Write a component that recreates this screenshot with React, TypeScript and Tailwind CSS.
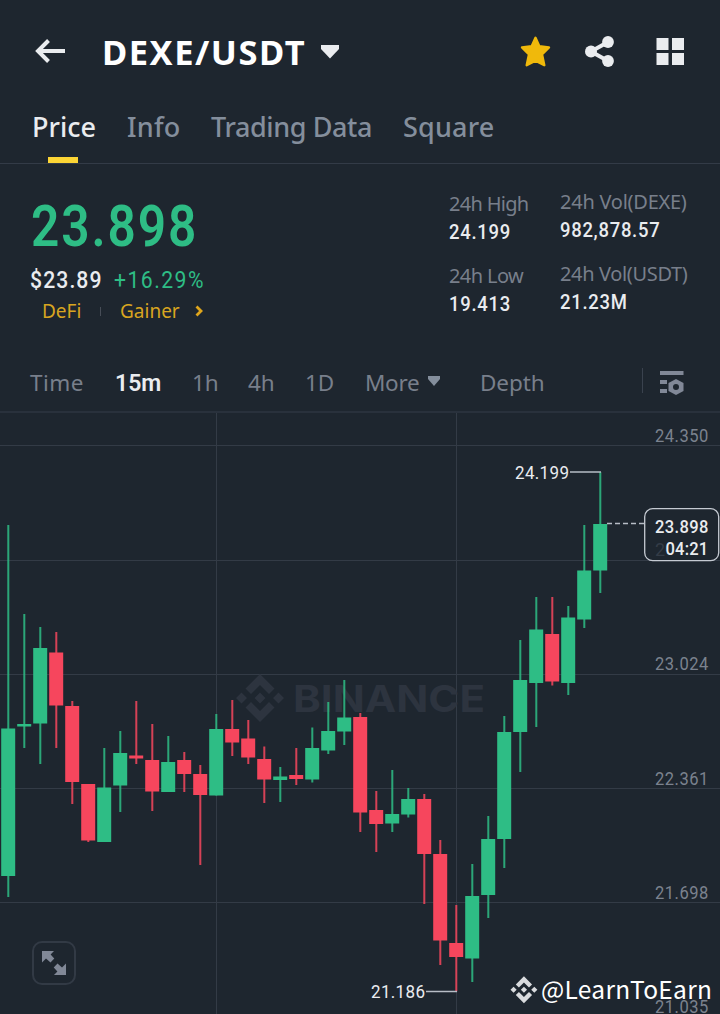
import type { ReactNode } from 'react';

type Candle = {
  readonly up: boolean;
  readonly high: number;
  readonly top: number;
  readonly bottom: number;
  readonly low: number;
};

const UP = '#2ebd85';
const DOWN = '#f6465d';
const CANDLE_STEP = 16;

const c = (up: 0 | 1, high: number, top: number, bottom: number, low: number): Candle => ({
  up: up === 1,
  high,
  top,
  bottom,
  low,
});

// Oldest first, y values in chart space
const CANDLES: readonly Candle[] = [
  c(1, 525, 728.5, 876, 897),
  c(1, 614, 724, 726.5, 748),
  c(1, 627, 648, 723.5, 764),
  c(0, 632, 652.5, 705.5, 748),
  c(0, 701, 706, 782, 804),
  c(0, 784, 784, 840.5, 842),
  c(1, 748, 787.5, 842, 842),
  c(1, 731, 753, 785.5, 812),
  c(0, 701, 755.5, 758.5, 764),
  c(0, 724, 760, 791.5, 811),
  c(1, 736, 762, 792, 792),
  c(0, 752, 760, 774, 792),
  c(0, 765, 774, 795, 865),
  c(1, 714, 729, 795.5, 795.5),
  c(0, 700, 729, 742.5, 756),
  c(0, 720, 738.5, 757.5, 764),
  c(0, 746.5, 759, 779.5, 803),
  c(1, 767, 776.5, 780, 802),
  c(0, 748, 775, 779, 785),
  c(1, 727.5, 748, 779.5, 782.5),
  c(1, 702, 731, 750.5, 754),
  c(1, 680, 717.5, 731.5, 745),
  c(0, 713, 717, 812.5, 832),
  c(0, 791, 810, 824, 852),
  c(1, 770, 814, 823.5, 832),
  c(1, 788, 799, 814.5, 817.5),
  c(0, 794, 799, 854, 904),
  c(0, 840, 854, 940.5, 965),
  c(0, 905, 943, 957, 991.5),
  c(1, 864, 896, 958.5, 982),
  c(1, 816, 839, 895, 918),
  c(1, 716, 732, 839, 868),
  c(1, 640, 680, 732, 772),
  c(1, 597, 629.5, 683, 727),
  c(0, 597, 634, 681.5, 685.5),
  c(1, 606, 617.5, 683, 695),
  c(1, 525, 570.5, 619.5, 628),
  c(1, 472, 524, 570.5, 593),
];

const GRID_Y = [445.5, 560.5, 674.5, 788.5, 902.5];
const GRID_X = [216.5, 456.5];

const AXIS_LABELS = [
  { label: '24.350', y: 442 },
  { label: '23.024', y: 670 },
  { label: '22.361', y: 785 },
  { label: '21.698', y: 899 },
  { label: '21.035', y: 1013 },
];

const TABS = [
  { label: 'Price', className: 'w-16 text-[#eaecef]' },
  { label: 'Info', className: 'w-[53px] tracking-[0.2px] text-[#848e9c]' },
  { label: 'Trading Data', className: 'w-[161px] tracking-[-0.4px] text-[#848e9c]' },
  { label: 'Square', className: 'w-[91px] tracking-[0.2px] text-[#848e9c]' },
];

function BinanceMark() {
  return (
    <path d="M24 0 38.5 14.5 33 20 24 11 15 20 9.5 14.5ZM0 24 5.5 18.5 11 24 5.5 29.5ZM37 24 42.5 18.5 48 24 42.5 29.5ZM18.5 24 24 18.5 29.5 24 24 29.5ZM9.5 33.5 15 28 24 37 33 28 38.5 33.5 24 48Z" />
  );
}

function Header() {
  return (
    <header className="flex h-[102px] items-center pl-[35px] pr-9">
      <svg className="h-6 w-[30px]" viewBox="0 0 30 24" fill="none" stroke="#eaecef" strokeWidth="4">
        <path d="M30 12H3M13.5 1.5 3 12 13.5 22.5" />
      </svg>
      <h1 className="ml-[37px] mt-0.5 w-[202px] whitespace-nowrap font-['Noto_Sans',sans-serif] text-[34.5px] font-bold leading-[44px] tracking-[1.5px] text-white">
        DEXE/USDT
      </h1>
      <svg className="ml-[17px] h-[15px] w-[18px]" viewBox="0 0 18 15" fill="#eaecef">
        <path d="M0 1H18V5L9 14.5 0 5Z" />
      </svg>
      <div className="ml-auto flex items-center">
        <svg className="mr-px h-[31px] w-[31px]" viewBox="0 0 31 31" fill="#f0b90b" stroke="#f0b90b" strokeWidth="2.4" strokeLinejoin="round">
          <path d="M15.5 1.8 19.3 10.3 29 11.4 22 18.3 24.3 29.2 15.5 24.6 6.7 29.2 9 18.3 2 11.4 11.7 10.3Z" />
        </svg>
        <svg className="ml-[33px] mr-px h-[31px] w-[29px]" viewBox="0 0 29 31" fill="#eaecef">
          <path d="M23 6 6 15.5 23 25" fill="none" stroke="#eaecef" strokeWidth="4" />
          <circle cx="23" cy="6" r="5.9" />
          <circle cx="6" cy="15.5" r="6" />
          <circle cx="23" cy="25" r="5.9" />
        </svg>
        <svg className="ml-[41px] h-[27px] w-7" viewBox="0 0 28 27" fill="#eaecef">
          <path d="M0.5 0H12.5V12H0.5ZM16 0H28V12H16ZM0.5 15H12.5V27H0.5ZM16 15H28V27H16Z" />
        </svg>
      </div>
    </header>
  );
}

function Tabs() {
  return (
    <nav className="flex h-[62px] gap-[31px] border-b border-[#333b47] pl-8 font-['Noto_Sans',sans-serif] text-[27px] font-medium leading-[50px]">
      {TABS.map((tab, i) => (
        <div key={tab.label} className={`flex flex-col whitespace-nowrap ${tab.className}`}>
          {tab.label}
          {i === 0 && <span className="ml-4 mt-[5px] h-1.5 w-[30px] bg-[#fcd535]" />}
        </div>
      ))}
    </nav>
  );
}

type StatProps = {
  readonly label: string;
  readonly labelClassName: string;
  readonly children: ReactNode;
};

function Stat({ label, labelClassName, children }: StatProps) {
  return (
    <div className="whitespace-nowrap leading-7">
      <div className={`font-['Noto_Sans',sans-serif] text-[20px] text-[#787f8b] ${labelClassName}`}>{label}</div>
      <div className="origin-left scale-x-90 font-[Roboto,sans-serif] text-[20.5px] font-medium tracking-[0.8px] text-[#eaecef]">
        {children}
      </div>
    </div>
  );
}

function Summary() {
  return (
    <section className="flex h-[188px] pl-8">
      <div className="w-[417px] pt-[33px]">
        <div className="-ml-px origin-left scale-x-[0.87] font-[Roboto,sans-serif] text-[57px] font-semibold leading-[60px] tracking-[2.2px] text-[#2ebd85]">
          23.898
        </div>
        <div className="-ml-0.5 mt-2 flex font-[Roboto,sans-serif] text-[23px] leading-8">
          <span className="w-[84px] origin-left scale-x-[0.92] font-medium tracking-[1.2px] text-[#eaecef]">$23.89</span>
          <span className="origin-left scale-x-[0.92] tracking-[1.6px] text-[#2ebd85]">+16.29%</span>
        </div>
        <div className="flex items-center pl-[10px] font-['Noto_Sans',sans-serif] text-[19px] leading-7 text-[#d9a520]">
          <span className="w-[58px]">DeFi</span>
          <span className="h-[9px] w-px bg-[#474d57]" />
          <span className="ml-[19px] w-[75px]">Gainer</span>
          <svg className="h-3 w-2" viewBox="0 0 8 12" fill="none" stroke="#e0a61c" strokeWidth="2.8">
            <path d="M1.5 1.5 6 6 1.5 10.5" />
          </svg>
        </div>
      </div>
      <div className="flex w-[111px] flex-col gap-4 pt-[26px]">
        <Stat label="24h High" labelClassName="tracking-[-0.7px]">24.199</Stat>
        <Stat label="24h Low" labelClassName="tracking-[-0.6px]">19.413</Stat>
      </div>
      <div className="flex flex-col gap-4 pt-6">
        <Stat label="24h Vol(DEXE)" labelClassName="tracking-[-0.25px]">982,878.57</Stat>
        <Stat label="24h Vol(USDT)" labelClassName="tracking-[-0.35px]">21.23M</Stat>
      </div>
    </section>
  );
}

function Intervals() {
  return (
    <div className="flex h-[59px] items-center whitespace-nowrap pl-[30px] pt-0.5 font-['Noto_Sans',sans-serif] text-[22.5px] text-[#787f8b]">
      <span className="w-[85px] tracking-[0.5px]">Time</span>
      <span className="mt-1 w-[77px] font-[Roboto,sans-serif] text-[23px] font-semibold text-[#eaecef]">15m</span>
      <span className="w-14">1h</span>
      <span className="w-[57px]">4h</span>
      <span className="w-[60px]">1D</span>
      <span className="w-[63px] tracking-[-0.3px]">More</span>
      <svg className="mb-[4px] h-[10px] w-3" viewBox="0 0 12 10" fill="#848e9c">
        <path d="M0 0H12V3L6 10 0 3Z" />
      </svg>
      <span className="ml-10 w-[162px] tracking-[-0.1px]">Depth</span>
      <span className="mb-1 h-[25px] w-px bg-[#3a424e]" />
      <svg className="ml-[17px] h-6 w-6" viewBox="0 0 24 24" fill="#818897">
        <path d="M0 0H23.5V4H0ZM0 9H7V13H0ZM0 18H7V22H0Z" />
        <path fillRule="evenodd" d="M16 8 23.5 12V20L16 24 8.5 20V12ZM16 13A3 3 0 1 0 16 19 3 3 0 1 0 16 13Z" />
      </svg>
    </div>
  );
}

function Chart() {
  return (
    <svg className="block h-[603px] w-[720px] font-[Roboto,sans-serif]" viewBox="0 411 720 603">
      <rect x="0" y="411" width="720" height="2" fill="#29313c" />
      <g stroke="#333b46" strokeWidth="1">
        {GRID_Y.map((y) => (
          <path key={y} d={`M0 ${y}H720`} />
        ))}
        {GRID_X.map((x) => (
          <path key={x} d={`M${x} 413V1014`} />
        ))}
      </g>

      {/* Watermark sits under the candles */}
      <g fill="#2d343f">
        <g transform="translate(236 674)">
          <BinanceMark />
        </g>
        <text x="293" y="711.5" fontSize="37" fontWeight="700" textLength="192" lengthAdjust="spacingAndGlyphs" className="font-[Inter,sans-serif]">
          BINANCE
        </text>
      </g>

      {CANDLES.map((candle, i) => {
        const x = 8 + i * CANDLE_STEP;
        return (
          <g key={x} fill={candle.up ? UP : DOWN}>
            <rect x={x - 0.7} y={candle.high} width="2" height={candle.low - candle.high} opacity="0.85" />
            <rect x={x - 6.8} y={candle.top} width="14" height={candle.bottom - candle.top} />
          </g>
        );
      })}

      <g fill="#7b828e" fontSize="18">
        {AXIS_LABELS.map(({ label, y }) => (
          <text key={label} transform={`translate(655 ${y}) scale(0.92 1)`} textLength="58">
            {label}
          </text>
        ))}
      </g>

      {/* High and low markers */}
      <g fill="#eaecef" fontSize="18.5">
        <text transform="translate(515 479) scale(0.92 1)" textLength="58.7">24.199</text>
        <text transform="translate(371 998) scale(0.92 1)" textLength="58.7">21.186</text>
      </g>
      <path d="M570 472H601M426 991.5H457" stroke="#b7bdc6" strokeWidth="1.5" />

      {/* Last price */}
      <path d="M607 523.5H645" stroke="#b7bdc6" strokeWidth="1.5" strokeDasharray="5 3" />
      <rect x="644.7" y="508.7" width="74" height="52" rx="8" fill="#1e262f" stroke="#c5cad2" strokeWidth="1.3" />
      <text x="655" y="556" fontSize="18" fill="#343c47">2</text>
      <g fill="#eaecef" fontSize="18" fontWeight="500">
        <text transform="translate(655 533) scale(0.92 1)" textLength="58">23.898</text>
        <text transform="translate(665.5 555) scale(0.92 1)" textLength="46.5">04:21</text>
      </g>

      <g fill="none" stroke="#323a45" strokeWidth="2">
        <rect x="33" y="942" width="42" height="42" rx="9" />
      </g>
      <g fill="#818897">
        <path d="M42 951H54L50.6 954.4 54.3 958.5 50.5 962.5 46 958.5 42 962.5Z" />
        <path d="M66 975H54L57.4 971.6 53.7 967.5 57.5 963.5 62 967.5 66 963.5Z" />
      </g>

      <g transform="translate(510.5 976.3) scale(0.56)" fill="#d9dbde">
        <BinanceMark />
      </g>
      <text x="541" y="999" fontSize="24.5" fill="#fff" textLength="171" className="font-['Noto_Sans_CJK_SC',sans-serif]">
        @LearnToEarn
      </text>
    </svg>
  );
}

export default function App() {
  return (
    <main className="h-[1014px] w-[720px] overflow-hidden bg-[#1e262f]">
      <Header />
      <Tabs />
      <Summary />
      <Intervals />
      <Chart />
    </main>
  );
}
